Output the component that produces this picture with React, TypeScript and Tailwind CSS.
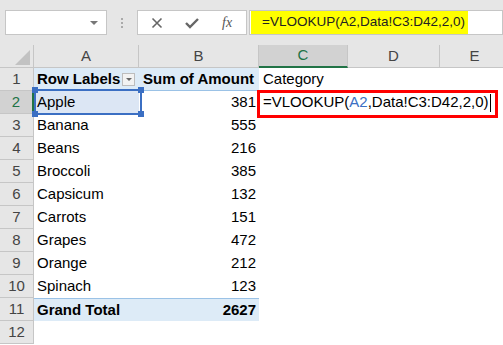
import React from "react";

const items = [
  { label: "Apple", amount: "381" },
  { label: "Banana", amount: "555" },
  { label: "Beans", amount: "216" },
  { label: "Broccoli", amount: "385" },
  { label: "Capsicum", amount: "132" },
  { label: "Carrots", amount: "151" },
  { label: "Grapes", amount: "472" },
  { label: "Orange", amount: "212" },
  { label: "Spinach", amount: "123" },
];

function RowHead({ n, active }: { n: number; active?: boolean }) {
  return (
    <div
      className={
        "w-[34px] h-[23px] shrink-0 flex items-center justify-center border-b border-[#c6c6c6] " +
        (active
          ? "bg-[#d2d2d2] text-[#217346] border-r-2 border-r-[#217346]"
          : "bg-[#e6e6e6] text-[#444] border-r border-r-[#c6c6c6]")
      }
    >
      {n}
    </div>
  );
}

function ColHead({ label, w, active }: { label: string; w: string; active?: boolean }) {
  return (
    <div
      className={
        w +
        " h-[23px] shrink-0 flex items-center justify-center border-r border-[#c6c6c6] " +
        (active
          ? "bg-[#d2d2d2] text-[#217346] border-b-2 border-b-[#217346]"
          : "bg-[#e6e6e6] text-[#444] border-b border-b-[#c6c6c6]")
      }
    >
      {label}
    </div>
  );
}

export default function App() {
  return (
    <div className="w-[503px] h-[345px] overflow-hidden bg-white font-['Liberation_Sans',Arial,sans-serif] text-[15px] text-black">
      {/* formula bar */}
      <div className="h-[45px] bg-[#e6e6e6] flex items-center">
        <div className="ml-[5px] w-[102px] h-[25px] bg-white border border-[#c6c6c6] flex items-center justify-end pr-[8px]">
          <div className="w-0 h-0 border-l-[4px] border-r-[4px] border-t-[4px] border-l-transparent border-r-transparent border-t-[#777]" />
        </div>
        <div className="ml-[14px] w-[3px] flex flex-col gap-[2px]">
          <div className="w-[2px] h-[2px] bg-[#aaa]" />
          <div className="w-[2px] h-[2px] bg-[#aaa]" />
          <div className="w-[2px] h-[2px] bg-[#aaa]" />
        </div>
        <div className="ml-[13px] w-[110px] h-[25px] bg-white border border-[#c6c6c6] flex items-center">
          <svg className="ml-[13px]" width="12" height="12" viewBox="0 0 12 12">
            <path d="M1.5 1.5 L10.5 10.5 M10.5 1.5 L1.5 10.5" stroke="#666" strokeWidth="1.6" />
          </svg>
          <svg className="ml-[22px]" width="14" height="12" viewBox="0 0 14 12">
            <path d="M1 6 L5 10 L13 2" stroke="#666" strokeWidth="2.4" fill="none" />
          </svg>
          <span className="ml-[23px] font-['Liberation_Serif',serif] italic text-[14px] text-[#555]">
            fx
          </span>
        </div>
        <div className="ml-[2px] flex-1 h-[25px] bg-white border border-[#c6c6c6] flex items-center pl-[1px]">
          <div className="w-[217px] h-[23px] bg-[#ffff00] flex items-center pl-[11px] text-[13.5px] text-[#222] whitespace-nowrap">
            =VLOOKUP(A2,Data!C3:D42,2,0)
          </div>
        </div>
      </div>

      {/* column headers */}
      <div className="flex">
        <div className="w-[34px] h-[23px] shrink-0 bg-[#e6e6e6] border-r border-b border-[#c6c6c6] flex items-end justify-end pr-[3px] pb-[2px]">
          <div className="w-0 h-0 border-l-[15px] border-t-[15px] border-l-transparent border-t-transparent border-b-0 border-r-0 relative">
            <div className="absolute right-0 bottom-0 w-0 h-0 border-l-[15px] border-b-[15px] border-l-transparent border-b-[#c2c2c2]" />
          </div>
        </div>
        <ColHead label="A" w="w-[105px]" />
        <ColHead label="B" w="w-[120px]" />
        <ColHead label="C" w="w-[89px]" active />
        <ColHead label="D" w="w-[92px]" />
        <ColHead label="E" w="w-[70px]" />
      </div>

      {/* row 1 */}
      <div className="flex">
        <RowHead n={1} />
        <div className="w-[105px] h-[23px] shrink-0 bg-[#ddebf7] border-b border-[#9bc2e6] flex items-center justify-between pl-[3px] pr-[4px] font-bold">
          <span>Row Labels</span>
          <div className="w-[13px] h-[13px] bg-[#f2f2f2] border border-[#bdbdbd] flex items-center justify-center">
            <div className="w-0 h-0 border-l-[3.5px] border-r-[3.5px] border-t-[3.5px] border-l-transparent border-r-transparent border-t-[#666]" />
          </div>
        </div>
        <div className="w-[120px] h-[23px] shrink-0 bg-[#ddebf7] border-b border-[#9bc2e6] flex items-center pl-[4px] font-bold whitespace-nowrap">
          Sum of Amount
        </div>
        <div className="h-[23px] flex items-center pl-[4px]">Category</div>
      </div>

      {/* data rows */}
      {items.map((it, i) => (
        <div key={it.label} className="flex">
          <RowHead n={i + 2} active={i === 0} />
          <div
            className={
              "w-[105px] h-[23px] shrink-0 flex items-center pl-[3px] relative " +
              (i === 0 ? "bg-[#dce6f4]" : "")
            }
          >
            {it.label}
            {i === 0 && (
              <div className="absolute left-[0px] top-[-2px] w-[108px] h-[26px] border-2 border-[#3b6fc3]">
                <div className="absolute left-[-4px] top-[-4px] w-[6px] h-[6px] bg-[#3b6fc3]" />
                <div className="absolute right-[-4px] top-[-4px] w-[6px] h-[6px] bg-[#3b6fc3]" />
                <div className="absolute left-[-4px] bottom-[-4px] w-[6px] h-[6px] bg-[#3b6fc3]" />
                <div className="absolute right-[-4px] bottom-[-4px] w-[6px] h-[6px] bg-[#3b6fc3]" />
              </div>
            )}
          </div>
          <div className="w-[120px] h-[23px] shrink-0 flex items-center justify-end pr-[3px]">
            {it.amount}
          </div>
          {i === 0 && (
            <div className="h-[23px] flex items-center pl-[4px] relative whitespace-nowrap">
              <span>=VLOOKUP(</span>
              <span className="text-[#3b6fc3]">A2</span>
              <span>,Data!C3:D42,2,0)</span>
              <div className="w-px h-[18px] bg-black ml-[1px]" />
              <div className="absolute left-[-2px] top-[-1px] w-[241px] h-[28px] border-[3px] border-[#ff0000]" />
            </div>
          )}
        </div>
      ))}

      {/* grand total */}
      <div className="flex">
        <RowHead n={11} />
        <div className="w-[105px] h-[23px] shrink-0 bg-[#ddebf7] border-t border-[#9bc2e6] flex items-center pl-[3px] font-bold">
          Grand Total
        </div>
        <div className="w-[120px] h-[23px] shrink-0 bg-[#ddebf7] border-t border-[#9bc2e6] flex items-center justify-end pr-[3px] font-bold">
          2627
        </div>
      </div>

      <div className="flex">
        <RowHead n={12} />
      </div>
    </div>
  );
}
